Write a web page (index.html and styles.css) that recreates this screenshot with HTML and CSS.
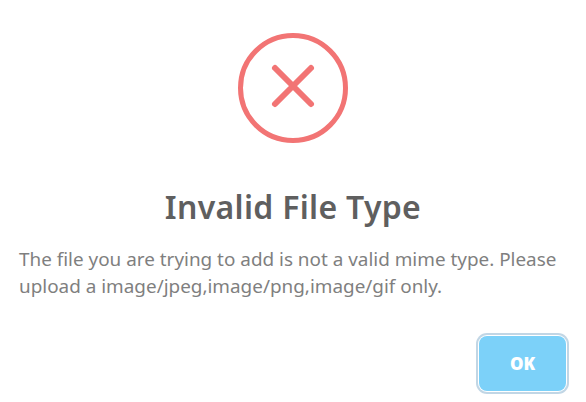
FILE: index.html
```html
<!DOCTYPE html>
<html lang="en">
<head>
<meta charset="utf-8">
<title>Invalid File Type</title>
<link rel="stylesheet" href="styles.css">
</head>
<body>
<main class="dialog">
  <svg class="icon" width="110" height="110" viewBox="0 0 110 110" aria-hidden="true">
    <circle cx="55" cy="55" r="52.5" fill="none" stroke="#f27474" stroke-width="5"/>
    <path d="M37 35 L73 71 M73 35 L37 71" fill="none" stroke="#f27474" stroke-width="6" stroke-linecap="round"/>
  </svg>
  <h1 class="title">Invalid File Type</h1>
  <p class="message">The file you are trying to add is not a valid mime type. Please upload a image/jpeg,image/png,image/gif only.</p>
  <div class="actions"><button class="ok" type="button">OK</button></div>
</main>
</body>
</html>
```
FILE: styles.css
```css
html, body {
  margin: 0;
  height: 100%;
  background: #fff;
}
.dialog {
  display: flex;
  flex-direction: column;
  box-sizing: border-box;
  width: 586px;
  height: 402px;
  padding: 33px 19px 0;
  font-family: "Noto Sans", "Open Sans", sans-serif;
}
.icon {
  display: block;
  align-self: center;
}
.title {
  margin: 44px 0 0;
  height: 40px;
  font-size: 32px;
  line-height: 40px;
  font-weight: 600;
  letter-spacing: 0.3px;
  color: #5f5f5f;
  text-align: center;
}
.message {
  margin: 19px 0 0;
  font-size: 18.9px;
  line-height: 27px;
  color: #7f7f7f;
}
.actions {
  display: flex;
  justify-content: flex-end;
  margin-top: 36px;
  margin-right: 1px;
}
.ok {
  box-sizing: border-box;
  width: 87px;
  height: 55px;
  border: 0;
  border-radius: 8px;
  background: #7cd1f9;
  box-shadow: 0 0 0 1px #fff, 0 0 0 3px rgba(43, 114, 165, 0.29);
  color: #fff;
  font-family: "Noto Sans", sans-serif;
  font-size: 17px;
  font-weight: 900;
  padding: 0;
}
```
